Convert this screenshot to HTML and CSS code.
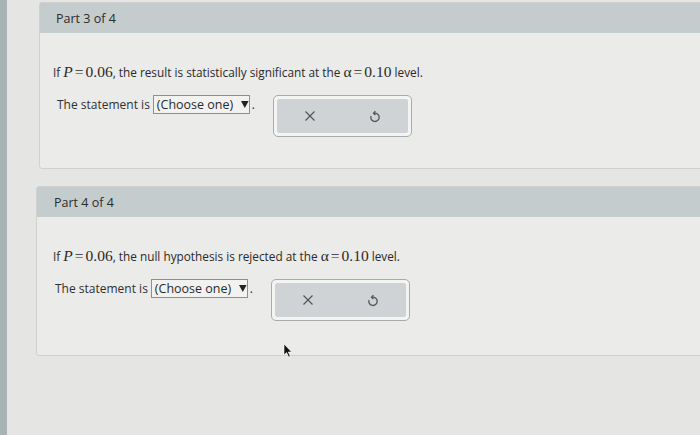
FILE: index.html
```html
<!DOCTYPE html>
<html>
<head>
<meta charset="utf-8">
<link rel="stylesheet" href="styles.css">
</head>
<body>
<div class="page">
  <div class="strip"></div>
  <div class="main">
    <section class="card card-a">
      <div class="card-head">Part 3 of 4</div>
      <div class="card-body">
        <p class="question">If <span class="m"><i>P</i><span class="eq">=</span>0.06</span>, the result is statistically significant at the <span class="m">α<span class="eq">=</span>0.10</span> level.</p>
        <div class="answer">
          <span class="label">The statement is</span>
          <span class="select">(Choose one)<svg class="tri" width="10" height="9" viewBox="0 0 10 9"><path d="M0 0 L10 0 L5 9 Z" fill="#222"/></svg></span>
          <span class="dot">.</span>
          <div class="tools">
            <div class="tools-in">
              <span class="tool"><svg width="12" height="12" viewBox="0 0 12 12"><path d="M1.5 1.5 L10.5 10.5 M10.5 1.5 L1.5 10.5" stroke="#555" stroke-width="1.2" fill="none"/></svg></span>
              <span class="tool"><svg width="12" height="13" viewBox="0 0 12 13"><path d="M5 3.2 A4.2 4.2 0 1 1 2 6" stroke="#555" stroke-width="1.3" fill="none"/><path d="M6.4 1.2 L4.5 3.2 L6.4 5" stroke="#555" stroke-width="1.3" fill="none"/></svg></span>
            </div>
          </div>
        </div>
      </div>
    </section>
    <section class="card card-b">
      <div class="card-head">Part 4 of 4</div>
      <div class="card-body">
        <p class="question">If <span class="m"><i>P</i><span class="eq">=</span>0.06</span>, the null hypothesis is rejected at the <span class="m">α<span class="eq">=</span>0.10</span> level.</p>
        <div class="answer">
          <span class="label">The statement is</span>
          <span class="select">(Choose one)<svg class="tri" width="10" height="9" viewBox="0 0 10 9"><path d="M0 0 L10 0 L5 9 Z" fill="#222"/></svg></span>
          <span class="dot">.</span>
          <div class="tools">
            <div class="tools-in">
              <span class="tool"><svg width="12" height="12" viewBox="0 0 12 12"><path d="M1.5 1.5 L10.5 10.5 M10.5 1.5 L1.5 10.5" stroke="#555" stroke-width="1.2" fill="none"/></svg></span>
              <span class="tool"><svg width="12" height="13" viewBox="0 0 12 13"><path d="M5 3.2 A4.2 4.2 0 1 1 2 6" stroke="#555" stroke-width="1.3" fill="none"/><path d="M6.4 1.2 L4.5 3.2 L6.4 5" stroke="#555" stroke-width="1.3" fill="none"/></svg></span>
            </div>
          </div>
        </div>
      </div>
    </section>
  </div>
  <svg class="cursor" width="10" height="16" viewBox="0 0 10 16"><path d="M1 1 L1 12 L3.6 9.6 L5.6 14 L7.2 13.3 L5.3 9 L8.6 9 Z" fill="#111" stroke="#fff" stroke-width="0.6"/></svg>
</div>
</body>
</html>
```
FILE: styles.css
```css
html, body {
  margin: 0;
  padding: 0;
}
body {
  background: #e5e6e4;
  font-family: "Open Sans", "DejaVu Sans", sans-serif;
  color: #303030;
  font-size: 11.8px;
}
.page {
  position: relative;
  display: flex;
  width: 700px;
  height: 435px;
  overflow: hidden;
}
.strip {
  width: 7px;
  flex: none;
  background: #a8b3b3;
}
.main {
  flex: 1;
  display: flex;
  flex-direction: column;
  gap: 17px;
  padding-top: 2px;
}
.card {
  width: 720px;
  background: #ebebe9;
  border: 1px solid #cfd0cf;
  border-radius: 3px;
  box-sizing: border-box;
}
.card-a {
  margin-left: 32px;
  height: 167px;
}
.card-b {
  margin-left: 29px;
  height: 170px;
}
.card-head {
  height: 30px;
  background: #c5cccd;
  display: flex;
  align-items: center;
  padding-left: 16px;
  font-size: 12.5px;
  color: #2c2c2c;
}
.card-b .card-head {
  padding-left: 17px;
}
.card-body {
  padding: 29px 0 0 13px;
}
.card-b .card-body {
  padding-left: 16px;
}
.question {
  margin: 0;
  line-height: 20px;
  height: 20px;
  color: #2a2a2a;
}
.m {
  font-family: "Liberation Serif", "DejaVu Serif", serif;
  font-size: 15.5px;
}
.eq {
  margin: 0 2px;
}
.answer {
  display: flex;
  align-items: flex-start;
  margin-top: 13px;
}
.label {
  line-height: 19px;
  margin-left: 4px;
  margin-right: 3px;
  font-size: 12px;
}
.card-b .label {
  margin-left: 2px;
}
.select {
  box-sizing: border-box;
  width: 97px;
  height: 19px;
  border: 1px solid #8f8f8f;
  background: #f2f2f0;
  padding-left: 3px;
  white-space: nowrap;
  color: #2a2a2a;
  display: flex;
  align-items: center;
  font-size: 12.5px;
}
.tri {
  margin-left: 8px;
}
.dot {
  line-height: 19px;
  margin-left: 2px;
}
.tools {
  margin-left: 18px;
  margin-top: 0;
  width: 139px;
  height: 42px;
  box-sizing: border-box;
  border: 1px solid #a9aaaa;
  border-radius: 5px;
  background: #f4f4f3;
  padding: 3px;
}
.tools-in {
  height: 100%;
  background: #cfd3d5;
  border-radius: 2px;
  display: flex;
}
.tool {
  flex: 1;
  display: flex;
  align-items: center;
  justify-content: center;
}
.cursor {
  position: absolute;
  left: 283px;
  top: 343px;
}
```
